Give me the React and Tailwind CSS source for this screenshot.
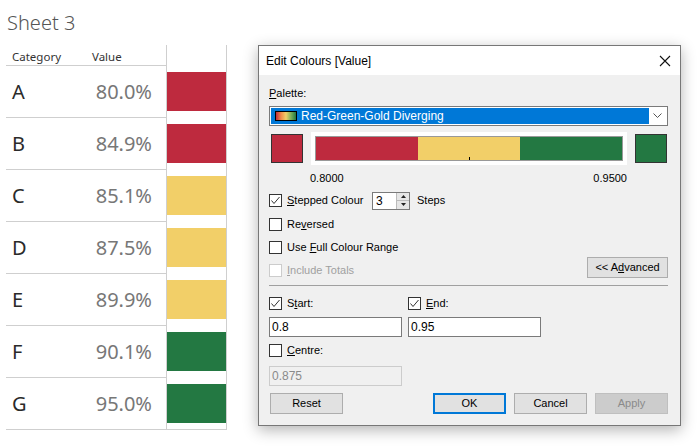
import React from 'react';

const rows = [
    { cat: 'A', value: '80.0%', color: 'bg-[#be2a3e]' },
    { cat: 'B', value: '84.9%', color: 'bg-[#be2a3e]' },
    { cat: 'C', value: '85.1%', color: 'bg-[#f2cf68]' },
    { cat: 'D', value: '87.5%', color: 'bg-[#f2cf68]' },
    { cat: 'E', value: '89.9%', color: 'bg-[#f2cf68]' },
    { cat: 'F', value: '90.1%', color: 'bg-[#237842]' },
    { cat: 'G', value: '95.0%', color: 'bg-[#237842]' },
];

const Check = ({ checked, disabled }) => (
    <span className={`w-[13px] h-[13px] shrink-0 border bg-white flex items-center justify-center ${disabled ? 'border-[#cccccc]' : 'border-[#333333]'}`}>
        {checked && (
            <svg width="11" height="11" viewBox="0 0 11 11">
                <polyline points="1.5,5.5 4,8.5 9.5,2" fill="none" stroke="#333" strokeWidth="1" />
            </svg>
        )}
    </span>
);

const Btn = ({ children, className = '' }) => (
    <div className={`w-[73px] h-[21px] flex items-center justify-center border ${className}`}>{children}</div>
);

const App = () => {
    return (
        <div className="relative w-[700px] h-[448px] bg-white overflow-hidden">

            {/* worksheet */}
            <div className="font-['Noto_Sans',sans-serif]">
                <div className="h-[45px] pl-[7px] pt-[8px] text-[20px] leading-[30px] font-light text-[#555]">Sheet 3</div>
                <div className="ml-[6px] w-[221px]">
                    <div className="flex h-[21px]">
                        <div className="w-[160px] border-b border-[#cfcfcf] flex items-center pt-[3px] text-[11.5px] text-[#333]">
                            <span className="w-[86px] pl-[6px]">Category</span>
                            <span>Value</span>
                        </div>
                        <div className="w-[61px] border-x border-[#cfcfcf]" />
                    </div>
                    {rows.map((r, i) => (
                        <div key={r.cat} className={`flex h-[52px] ${i === rows.length - 1 ? 'border-b border-[#cfcfcf]' : ''}`}>
                            <div className={`w-[160px] flex items-center ${i === rows.length - 1 ? '' : 'border-b border-[#cfcfcf]'}`}>
                                <span className="w-[86px] pl-[6px] text-[20px] text-[#2a2a2a]">{r.cat}</span>
                                <span className="w-[60px] text-right text-[20px] text-[#777]">{r.value}</span>
                            </div>
                            <div className="w-[61px] border-x border-[#cfcfcf] pt-[6px]">
                                <div className={`h-[39px] ${r.color}`} />
                            </div>
                        </div>
                    ))}
                </div>
            </div>

            {/* dialog */}
            <div className="absolute left-[258px] top-[45px] w-[423px] h-[381px] border border-[#777] bg-[#f0f0f0] shadow-[0_4px_14px_rgba(0,0,0,0.3)] font-['Liberation_Sans',sans-serif] text-[11px] text-black">
                <div className="h-[29px] bg-white flex items-center justify-between pl-[7px] pr-[9px] text-[12px]">
                    <span>Edit Colours [Value]</span>
                    <svg width="12" height="12" viewBox="0 0 12 12">
                        <path d="M1 1 L11 11 M11 1 L1 11" stroke="#111" strokeWidth="1.1" />
                    </svg>
                </div>

                <div className="pl-[10px] pr-[12px] pt-[10px] flex flex-col">
                    <div className="h-4 leading-4"><u>P</u>alette:</div>

                    <div className="mt-[5px] h-[20px] border border-[#7a7a7a] bg-white flex p-px">
                        <div className="flex-1 bg-[#0078d7] flex items-center pl-[4px] text-white">
                            <span className="w-[22px] h-[10px] border border-black bg-[linear-gradient(90deg,#be2a3e,#f08a4b,#f2cf68,#7bb05a,#237842)]" />
                            <span className="ml-[4px] text-[12px]">Red-Green-Gold Diverging</span>
                        </div>
                        <div className="w-[17px] flex items-center justify-center">
                            <svg width="9" height="6" viewBox="0 0 9 6">
                                <polyline points="0.5,0.5 4.5,4.5 8.5,0.5" fill="none" stroke="#555" strokeWidth="1" />
                            </svg>
                        </div>
                    </div>

                    <div className="mt-[6px] h-[33px] flex items-center">
                        <div className="ml-[2px] w-[32px] h-[29px] border border-[#333] bg-[#be2a3e]" />
                        <div className="ml-[8px] w-[316px] h-[33px] bg-white p-[4px]">
                            <div className="relative h-[25px] border border-[#999] flex">
                                <div className="flex-1 bg-[#be2a3e]" />
                                <div className="flex-1 bg-[#f2cf68]" />
                                <div className="flex-1 bg-[#237842]" />
                                <div className="absolute left-1/2 bottom-0 w-px h-[3px] bg-black" />
                            </div>
                        </div>
                        <div className="ml-[8px] w-[32px] h-[29px] border border-[#333] bg-[#237842]" />
                    </div>

                    <div className="mt-[5px] h-4 leading-4 flex">
                        <span className="ml-[41px]">0.8000</span>
                        <span className="ml-auto mr-[41px]">0.9500</span>
                    </div>

                    <div className="mt-[5px] h-[19px] flex items-center">
                        <div className="w-[103px] flex items-center gap-[5px]">
                            <Check checked />
                            <span><u>S</u>tepped Colour</span>
                        </div>
                        <div className="w-[38px] h-[18px] border border-[#7a7a7a] bg-white flex">
                            <span className="flex-1 pl-[3px] leading-[16px] text-[12px]">3</span>
                            <div className="w-[13px] flex flex-col border-l border-[#bbb]">
                                <div className="flex-1 bg-[#e6e6e6] border-b border-[#bbb] flex items-center justify-center">
                                    <svg width="5" height="3" viewBox="0 0 5 3"><polygon points="2.5,0 5,3 0,3" fill="#222" /></svg>
                                </div>
                                <div className="flex-1 bg-[#e6e6e6] flex items-center justify-center">
                                    <svg width="5" height="3" viewBox="0 0 5 3"><polygon points="0,0 5,0 2.5,3" fill="#222" /></svg>
                                </div>
                            </div>
                        </div>
                        <span className="ml-[7px]">Steps</span>
                    </div>

                    <div className="mt-[5px] h-[19px] flex items-center gap-[5px]">
                        <Check />
                        <span>Re<u>v</u>ersed</span>
                    </div>

                    <div className="mt-[4px] h-[19px] flex items-center gap-[5px]">
                        <Check />
                        <span>Use <u>F</u>ull Colour Range</span>
                    </div>

                    <div className="h-[21px] flex justify-between items-end">
                        <div className="h-[13px] mb-px flex items-center gap-[5px] text-[#a0a0a0]">
                            <Check disabled />
                            <span><u>I</u>nclude Totals</span>
                        </div>
                        <div className="w-[81px] h-[21px] border border-[#adadad] bg-[#e1e1e1] flex items-center justify-center">&lt;&lt; A<u>d</u>vanced</div>
                    </div>

                    <div className="mt-[7px] h-px bg-[#a0a0a0]" />

                    <div className="mt-[8px] h-[19px] flex items-center">
                        <div className="w-[139px] flex items-center gap-[5px]">
                            <Check checked />
                            <span>S<u>t</u>art:</span>
                        </div>
                        <div className="flex items-center gap-[5px]">
                            <Check checked />
                            <span><u>E</u>nd:</span>
                        </div>
                    </div>

                    <div className="mt-[4px] flex gap-[6px]">
                        <div className="w-[133px] h-[20px] border border-[#7a7a7a] bg-white pl-[2px] leading-[18px] text-[12px]">0.8</div>
                        <div className="w-[133px] h-[20px] border border-[#7a7a7a] bg-white pl-[2px] leading-[18px] text-[12px]">0.95</div>
                    </div>

                    <div className="mt-[4px] h-[19px] flex items-center gap-[5px]">
                        <Check />
                        <span><u>C</u>entre:</span>
                    </div>

                    <div className="mt-[6px] w-[133px] h-[20px] border border-[#cccccc] bg-[#f0f0f0] pl-[2px] leading-[18px] text-[12px] text-[#8a8a8a]">0.875</div>

                    <div className="mt-[7px] flex">
                        <Btn className="ml-px border-[#adadad] bg-[#e1e1e1]">Reset</Btn>
                        <Btn className="ml-auto border-2 border-[#0078d7] bg-[#e1e1e1]">OK</Btn>
                        <Btn className="ml-[8px] border-[#adadad] bg-[#e1e1e1]">Cancel</Btn>
                        <Btn className="ml-[8px] border-[#bfbfbf] bg-[#cccccc] text-[#8a8a8a]">Apply</Btn>
                    </div>
                </div>
            </div>
        </div>
    );
};

export default App;
